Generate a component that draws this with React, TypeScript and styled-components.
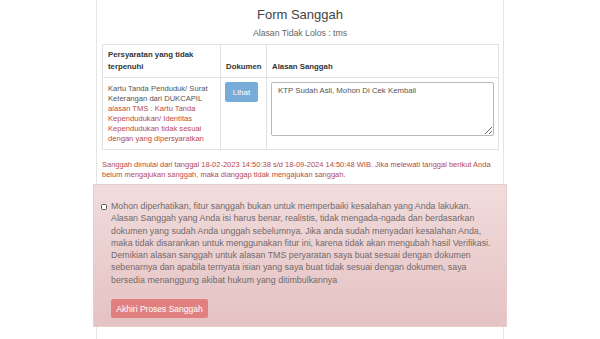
import React from "react";
import styled, { createGlobalStyle } from "styled-components";

const GlobalStyle = createGlobalStyle`
  html, body { margin: 0; padding: 0; background: #ffffff; }
  body { font-family: "Liberation Sans", Arial, Helvetica, sans-serif; color: #555; }
  * { box-sizing: border-box; }
`;

const Page = styled.div`
  width: 600px;
  height: 339px;
  overflow: hidden;
  display: flex;
  justify-content: center;
`;

const Column = styled.div`
  width: 414px;
  display: flex;
  flex-direction: column;
`;

const PanelTop = styled.div`
  margin: 0 3px;
  border-left: 1px solid #e4e4e4;
  border-right: 1px solid #e4e4e4;
  padding: 7px 5px 5px;
`;

const PanelBottom = styled.div`
  flex: 1;
  margin: 0 3px;
  border-left: 1px solid #e4e4e4;
  border-right: 1px solid #e4e4e4;
`;

const Title = styled.h3`
  margin: 0;
  text-align: center;
  font-size: 13px;
  line-height: 16px;
  font-weight: normal;
  color: #444;
`;

const Subtitle = styled.div`
  margin-top: 4px;
  text-align: center;
  font-size: 8.7px;
  line-height: 12px;
  color: #666;
`;

const Table = styled.table`
  margin-top: 5px;
  width: 396px;
  border-collapse: collapse;
  table-layout: fixed;
`;

const HeadCell = styled.th<{ $w: number }>`
  width: ${(p) => p.$w}px;
  border: 1px solid #e2e2e2;
  padding: 4px 5px 4px;
  text-align: left;
  vertical-align: bottom;
  font-size: 7.8px;
  line-height: 12px;
  font-weight: bold;
  color: #333;
`;

const Cell = styled.td<{ $pl?: number }>`
  border: 1px solid #e2e2e2;
  padding: 4px 5px 5px ${(p) => p.$pl ?? 5}px;
  vertical-align: top;
  font-size: 7.6px;
  line-height: 10px;
  color: #555;
`;

const ReqText = styled.div`
  padding-top: 2px;
`;

const Red = styled.span`
  color: #b94a45;
`;

const ViewButton = styled.button`
  width: 33px;
  height: 20px;
  border: none;
  border-radius: 2px;
  background: #78acd9;
  color: #fff;
  font-family: inherit;
  font-size: 8px;
  padding: 0;
`;

const TextArea = styled.textarea`
  display: block;
  width: 223px;
  height: 54px;
  border: 1px solid #b8b8b8;
  border-radius: 2px;
  padding: 3px 6px;
  font-family: inherit;
  font-size: 7.8px;
  line-height: 10px;
  color: #555;
  resize: vertical;
`;

const Notice = styled.p`
  margin: 10px 0 0;
  font-size: 7.5px;
  line-height: 9.5px;
  color: #b94a45;
`;

const Alert = styled.div`
  background: linear-gradient(to bottom, #f1dcdc 0%, #e5c2c3 100%);
  border: 1px solid #ebcaca;
  padding: 15px 7px 8px;
`;

const CheckRow = styled.label`
  display: flex;
  align-items: flex-start;
  gap: 4px;
`;

const Check = styled.input`
  appearance: none;
  flex: none;
  width: 6px;
  height: 6px;
  margin: 4px 0 0;
  border: 1px solid #555;
  border-radius: 1.5px;
  background: #fff;
`;

const AlertText = styled.div`
  font-size: 8.85px;
  line-height: 12.3px;
  color: #736a6a;
  white-space: nowrap;
`;

const EndButton = styled.button`
  margin: 13px 0 0 10px;
  width: 97px;
  height: 19px;
  border: none;
  border-radius: 2px;
  background: #e18081;
  color: #fff;
  font-family: inherit;
  font-size: 8.5px;
  padding: 0;
`;

export default function App() {
  return (
    <>
      <GlobalStyle />
      <Page>
        <Column>
          <PanelTop>
            <Title>Form Sanggah</Title>
            <Subtitle>Alasan Tidak Lolos : tms</Subtitle>
            <Table>
              <thead>
                <tr>
                  <HeadCell $w={118}>Persyaratan yang tidak terpenuhi</HeadCell>
                  <HeadCell $w={46}>Dokumen</HeadCell>
                  <HeadCell $w={232}>Alasan Sanggah</HeadCell>
                </tr>
              </thead>
              <tbody>
                <tr>
                  <Cell>
                    <ReqText>
                      Kartu Tanda Penduduk/ Surat Keterangan dari DUKCAPIL
                      <br />
                      <Red>
                        alasan TMS : Kartu Tanda Kependudukan/ Identitas Kependudukan tidak sesuai
                        dengan yang dipersyaratkan
                      </Red>
                    </ReqText>
                  </Cell>
                  <Cell $pl={4}>
                    <ViewButton>Lihat</ViewButton>
                  </Cell>
                  <Cell $pl={4}>
                    <TextArea defaultValue="KTP Sudah Asli, Mohon Di Cek Kembali" />
                  </Cell>
                </tr>
              </tbody>
            </Table>
            <Notice>
              Sanggah dimulai dari tanggal 18-02-2023 14:50:38 s/d 18-09-2024 14:50:48 WIB. Jika
              melewati tanggal berikut Anda
              <br />
              belum mengajukan sanggah, maka dianggap tidak mengajukan sanggah.
            </Notice>
          </PanelTop>
          <Alert>
            <CheckRow>
              <Check type="checkbox" />
              <AlertText>
                Mohon diperhatikan, fitur sanggah bukan untuk memperbaiki kesalahan yang Anda lakukan.
                <br />
                Alasan Sanggah yang Anda isi harus benar, realistis, tidak mengada-ngada dan berdasarkan
                <br />
                dokumen yang sudah Anda unggah sebelumnya. Jika anda sudah menyadari kesalahan Anda,
                <br />
                maka tidak disarankan untuk menggunakan fitur ini, karena tidak akan mengubah hasil Verifikasi.
                <br />
                Demikian alasan sanggah untuk alasan TMS peryaratan saya buat sesuai dengan dokumen
                <br />
                sebenarnya dan apabila ternyata isian yang saya buat tidak sesuai dengan dokumen, saya
                <br />
                bersedia menanggung akibat hukum yang ditimbulkannya
              </AlertText>
            </CheckRow>
            <EndButton>Akhiri Proses Sanggah</EndButton>
          </Alert>
          <PanelBottom />
        </Column>
      </Page>
    </>
  );
}
